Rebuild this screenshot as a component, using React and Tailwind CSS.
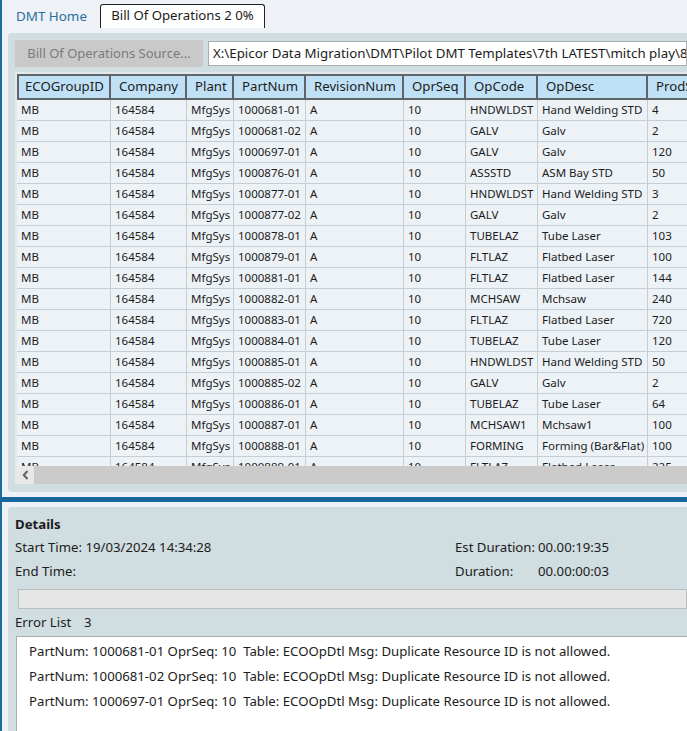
const columns = [
  { name: 'ECOGroupID', width: 'w-[94px]' },
  { name: 'Company', width: 'w-[76px]' },
  { name: 'Plant', width: 'w-[47px]' },
  { name: 'PartNum', width: 'w-[72px]' },
  { name: 'RevisionNum', width: 'w-[98px]' },
  { name: 'OprSeq', width: 'w-[62px]' },
  { name: 'OpCode', width: 'w-[72px]' },
  { name: 'OpDesc', width: 'w-[110px]' },
  { name: 'ProdStandard', width: 'w-[90px]' },
];

const rows = [
  ['1000681-01', 'HNDWLDST', 'Hand Welding STD', '4'],
  ['1000681-02', 'GALV', 'Galv', '2'],
  ['1000697-01', 'GALV', 'Galv', '120'],
  ['1000876-01', 'ASSSTD', 'ASM Bay STD', '50'],
  ['1000877-01', 'HNDWLDST', 'Hand Welding STD', '3'],
  ['1000877-02', 'GALV', 'Galv', '2'],
  ['1000878-01', 'TUBELAZ', 'Tube Laser', '103'],
  ['1000879-01', 'FLTLAZ', 'Flatbed Laser', '100'],
  ['1000881-01', 'FLTLAZ', 'Flatbed Laser', '144'],
  ['1000882-01', 'MCHSAW', 'Mchsaw', '240'],
  ['1000883-01', 'FLTLAZ', 'Flatbed Laser', '720'],
  ['1000884-01', 'TUBELAZ', 'Tube Laser', '120'],
  ['1000885-01', 'HNDWLDST', 'Hand Welding STD', '50'],
  ['1000885-02', 'GALV', 'Galv', '2'],
  ['1000886-01', 'TUBELAZ', 'Tube Laser', '64'],
  ['1000887-01', 'MCHSAW1', 'Mchsaw1', '100'],
  ['1000888-01', 'FORMING', 'Forming (Bar&Flat)', '100'],
  ['1000889-01', 'FLTLAZ', 'Flatbed Laser', '225'],
];

const errors = ['1000681-01', '1000681-02', '1000697-01'];

function Grid() {
  return (
    <div className="mt-[5px] ml-[7px] mr-[-200px] bg-[#e4e9ec] pl-[2px] pt-[2px]">
      <div className="flex h-[26px]">
        {columns.map((col) => (
          <div
            key={col.name}
            className={`${col.width} shrink-0 flex items-center overflow-hidden whitespace-nowrap border-2 border-l-0 border-[#5f6468] pl-[8px] first:border-l-2 first:pl-[6px] bg-[#c0e1f5] text-[13.2px] text-[#1c1c1c]`}
          >
            {col.name}
          </div>
        ))}
      </div>
      <div className="h-[366px] overflow-hidden">
        {rows.map((row) => {
          const cells = ['MB', '164584', 'MfgSys', row[0], 'A', '10', row[1], row[2], row[3]];
          return (
            <div key={row[0]} className="flex h-[21px] border-b border-[#c6ced4] bg-[#edf2f6]">
              {cells.map((cell, i) => (
                <div
                  key={i}
                  className={`${columns[i].width} shrink-0 overflow-hidden whitespace-nowrap border-r border-[#c6ced4] pl-[4px] text-[11.5px] leading-[20px] text-[#1c1c1c]`}
                >
                  {cell}
                </div>
              ))}
            </div>
          );
        })}
      </div>
      <div className="flex h-[18px] bg-[#cbcbcb]">
        <div className="flex w-[17px] items-center justify-center bg-[#e8e8e8]">
          <svg width="7" height="10" viewBox="0 0 7 10">
            <path d="M5.5 1 L1.8 5 L5.5 9" fill="none" stroke="#606060" strokeWidth="2" />
          </svg>
        </div>
      </div>
    </div>
  );
}

export default function App() {
  return (
    <div className="h-[731px] w-[687px] overflow-hidden border-l-2 border-[#1a6c9e] bg-[#eef2f6] font-['Noto_Sans',sans-serif] text-[#1c1c1c]">
      {/* tabs */}
      <div className="flex h-[33px] items-end pl-[14px]">
        <div className="mb-[7px] text-[13.4px] text-[#2a6f9c]">DMT Home</div>
        <div className="mb-[5px] ml-[13px] flex h-[24px] w-[165px] items-center justify-center rounded-t-[3px] border border-b-0 border-[#222] bg-white pb-[2px] text-[13.2px]">
          Bill Of Operations 2 0%
        </div>
      </div>

      {/* top panel */}
      <div className="ml-[6px] h-[459px] overflow-hidden rounded-l-[4px] bg-[#d0dde1] pt-[7px]">
        <div className="flex items-center pl-[7px]">
          <div className="flex h-[27px] w-[188px] shrink-0 items-center justify-center bg-[#c9c9c9] text-[13px] text-[#7b7b7b]">
            Bill Of Operations Source...
          </div>
          <div className="ml-[5px] h-[25px] flex-1 overflow-hidden whitespace-nowrap border border-[#a8adb0] bg-white pl-[4px] text-[13.3px] leading-[23px]">
            X:\Epicor Data Migration\DMT\Pilot DMT Templates\7th LATEST\mitch play\8
          </div>
        </div>
        <Grid />
      </div>

      {/* splitter */}
      <div className="mt-[5px] h-[5px] bg-[#17699b]" />

      {/* details */}
      <div className="ml-[6px] mt-[5px] h-[224px] overflow-hidden rounded-tl-[4px] bg-[#d0dde1] pl-[7px] pt-[8px] text-[13.2px]">
        <div className="font-bold">Details</div>
        <div className="mt-[4px] flex h-[18px] items-center">
          <div className="w-[440px]">Start Time: 19/03/2024 14:34:28</div>
          <div className="w-[83px]">Est Duration:</div>
          <div>00.00:19:35</div>
        </div>
        <div className="mt-[6px] flex h-[18px] items-center">
          <div className="w-[440px]">End Time:</div>
          <div className="w-[83px]">Duration:</div>
          <div>00.00:00:03</div>
        </div>
        <div className="ml-[3px] mt-[8px] h-[20px] border border-[#b9bdbf] bg-[#e6e6e6]" />
        <div className="mt-[5px] flex h-[18px] items-center">
          <div className="w-[69px]">Error List</div>
          <div>3</div>
        </div>
        <div className="ml-[1px] mt-[4px] h-[100px] border-l border-t border-[#a8adb0] bg-white pl-[12px] pt-[2px]">
          {errors.map((part) => (
            <div key={part} className="h-[25px] whitespace-pre leading-[25px]">
              {`PartNum: ${part} OprSeq: 10  Table: ECOOpDtl Msg: Duplicate Resource ID is not allowed.`}
            </div>
          ))}
        </div>
      </div>
    </div>
  );
}
